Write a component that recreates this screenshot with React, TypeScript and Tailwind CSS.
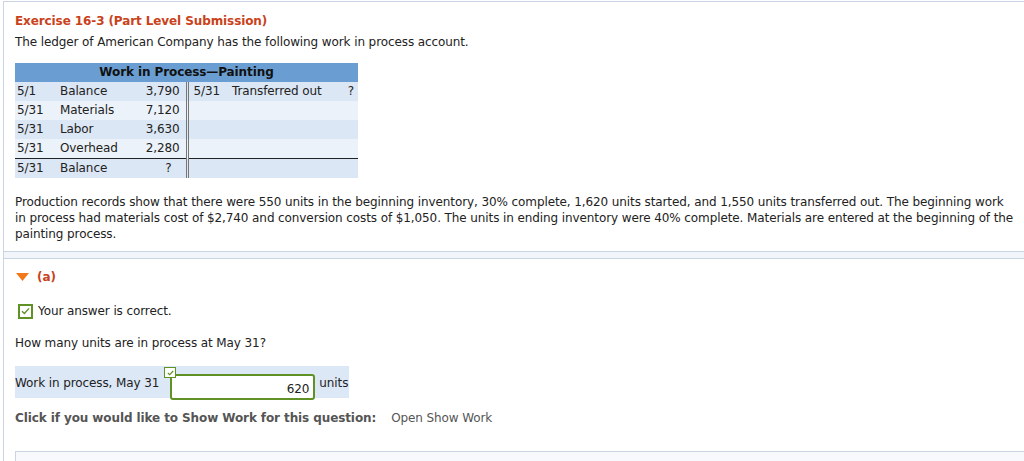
export default function App() {
  const rows = [
    { d: "5/1", t: "Balance", a: "3,790", cd: "5/31", ct: "Transferred out", ca: "?", dark: true },
    { d: "5/31", t: "Materials", a: "7,120", dark: false },
    { d: "5/31", t: "Labor", a: "3,630", dark: true },
    { d: "5/31", t: "Overhead", a: "2,280", dark: false },
  ];
  return (
    <div className="w-[1024px] h-[461px] overflow-hidden bg-white text-[12px] tracking-[-0.1px] text-[#222] font-['DejaVu_Sans',Verdana,sans-serif]">
      <div className="pt-px pl-[3px]">
        {/* problem panel */}
        <div className="border-l border-t border-b border-[#c9d5e4] h-[251px] pl-[11px] pt-[11px]">
          <div className="text-[12px] font-bold text-[#c9421b] leading-4">
            Exercise 16-3 (Part Level Submission)
          </div>
          <div className="mt-[5px] leading-4">
            The ledger of American Company has the following work in process account.
          </div>
          <table className="mt-[13px] w-[343px] border-collapse leading-[19px]">
            <thead>
              <tr>
                <th colSpan={6} className="bg-[#6a9ed2] h-[19px] font-bold text-[#111] text-center p-0">
                  Work in Process—Painting
                </th>
              </tr>
            </thead>
            <tbody>
              {rows.map((r, i) => (
                <tr key={i} className={r.dark ? "bg-[#dce7f5]" : "bg-[#ecf2fa]"}>
                  <td className="w-[45px] pl-[2px] h-[19px] p-0">{r.d}</td>
                  <td className="w-[76px] p-0">{r.t}</td>
                  <td className="w-[51px] text-right pr-[6px] p-0">{r.a}</td>
                  <td className="w-[45px] pl-[5px] p-0 border-l-[3px] border-double border-[#777]">{r.cd ?? ""}</td>
                  <td className="w-[106px] p-0">{r.ct ?? ""}</td>
                  <td className="text-right pr-[4px] p-0">{r.ca ?? ""}</td>
                </tr>
              ))}
              <tr className="bg-[#dce7f5] border-t border-[#222]">
                <td className="pl-[2px] h-[19px] p-0">5/31</td>
                <td className="p-0">Balance</td>
                <td className="text-right pr-[14px] p-0">?</td>
                <td className="p-0 border-l-[3px] border-double border-[#777]"></td>
                <td className="p-0"></td>
                <td className="p-0"></td>
              </tr>
            </tbody>
          </table>
          <p className="mt-[16px] leading-4 w-[1000px]">
            Production records show that there were 550 units in the beginning inventory, 30% complete, 1,620 units
            started, and 1,550 units transferred out. The beginning work in process had materials cost of $2,740 and
            conversion costs of $1,050. The units in ending inventory were 40% complete. Materials are entered at the
            beginning of the painting process.
          </p>
        </div>
        <div className="h-[6px] bg-[#f2f5f9] border-l border-[#c9d5e4]"></div>
        {/* part (a) */}
        <div className="border-l border-t border-[#c9d5e4] h-[210px] pl-[11px] pt-[10px]">
          <div className="flex items-center gap-[8px] h-4">
            <svg width="13" height="8" viewBox="0 0 13 8" className="ml-[1px]">
              <polygon points="0,0 13,0 6.5,8" fill="#f07a1a" />
            </svg>
            <span className="text-[12px] font-bold text-[#c9421b]">(a)</span>
          </div>
          <div className="mt-[18px] flex items-center ml-[3px] h-4">
            <span className="w-[15px] h-[15px] border-2 border-[#5f9125] bg-white flex items-center justify-center">
              <svg width="9" height="8" viewBox="0 0 9 8">
                <path d="M1 4.2 L3.4 6.4 L8 1.4" stroke="#5f9125" strokeWidth="1.4" fill="none" />
              </svg>
            </span>
            <span className="ml-[5px]">Your answer is correct.</span>
          </div>
          <div className="mt-[16px] leading-4">How many units are in process at May 31?</div>
          <div className="mt-[15px] w-[334px] h-[32px] bg-[#dde8f7] flex items-center whitespace-nowrap">
            <span className="mt-[1px] shrink-0">Work in process, May 31</span>
            <div className="relative ml-[11px] mt-[10px] shrink-0">
              <span className="absolute -left-[6px] -top-[7px] w-[12px] h-[11px] bg-white border border-[#5f9125] flex items-center justify-center">
                <svg width="7" height="6" viewBox="0 0 7 6">
                  <path d="M0.8 3 L2.7 4.7 L6.2 1" stroke="#5f9125" strokeWidth="1.1" fill="none" />
                </svg>
              </span>
              <div className="w-[145px] h-[26px] border-2 border-[#5f9125] rounded-[3px] bg-white flex items-center justify-end pr-[4px] pt-[3px]">
                620
              </div>
            </div>
            <span className="ml-[4px] mt-[1px] shrink-0">units</span>
          </div>
          <div className="mt-[12px] flex items-center h-4 text-[#555]">
            <span className="font-bold">Click if you would like to Show Work for this question:</span>
            <span className="ml-[15px]">Open Show Work</span>
          </div>
          <div className="mt-[25px] h-[20px] border-l border-t border-[#c9d5e4] bg-[#f7f9fc]"></div>
        </div>
      </div>
    </div>
  );
}
